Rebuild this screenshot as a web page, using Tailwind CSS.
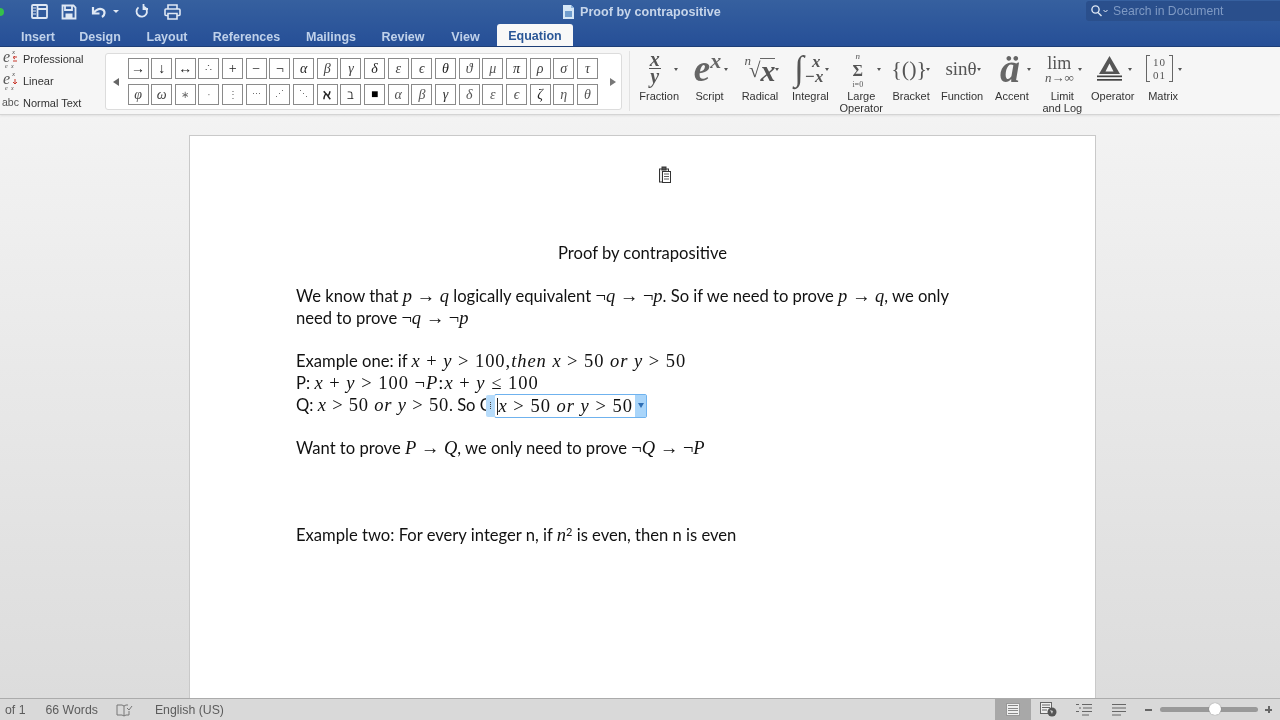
<!DOCTYPE html>
<html>
<head>
<meta charset="utf-8">
<script src="https://cdn.jsdelivr.net/npm/@tailwindcss/browser@4"></script>
</head>
<body class="m-0 overflow-hidden">
<div class="w-[1280px] h-[720px] flex flex-col overflow-hidden font-['Liberation_Sans',sans-serif] bg-[#e4e4e4] blur-[0.3px]">

  <!-- Title bar -->
  <div class="h-[47px] shrink-0 flex flex-col bg-gradient-to-b from-[#36609f] to-[#264f97] border-b border-[#1e3f78]">
    <div class="h-[23px] flex items-center relative">
      <div class="w-[4px] h-[8px] bg-[#35c04a] rounded-r-full"></div>
      <div class="flex items-center text-[#dfe8f4] ml-[27px] gap-[13px]">
        <svg class="w-[17px] h-[15px]" viewBox="0 0 17 15" fill="none" stroke="currentColor" stroke-width="1.800"><rect x="1" y="1" width="15" height="13" rx="1"/><path d="M6.500 1v13M6.500 5h9.500"/><path d="M2 4h3M2 7h3M2 10h3" stroke-width="1"/></svg>
        <svg class="w-[16px] h-[16px]" viewBox="0 0 16 16" fill="none" stroke="currentColor" stroke-width="1.800"><path d="M1.500 1.500h11l2 2v11h-13z"/><path d="M4 1.500v4.500h7V1.500" /><rect x="4.500" y="9.500" width="7" height="5" fill="currentColor" stroke="none"/></svg>
        <div class="flex items-center ml-[1px]">
          <svg class="w-[17px] h-[14px]" viewBox="0 0 17 14" fill="none" stroke="currentColor" stroke-width="2.200"><path d="M2 2v6.500h6.500"/><path d="M2.500 8.500c2-4 6-5.500 9-4 3 1.500 2.500 5.500-.5 7.500"/></svg>
          <div class="ml-[5px] w-0 h-0 border-l-[3px] border-r-[3px] border-t-[3px] border-l-transparent border-r-transparent border-t-[#dfe8f4]"></div>
        </div>
        <svg class="w-[14px] h-[15px] ml-[3px]" viewBox="0 0 14 15" fill="none" stroke="currentColor" stroke-width="1.800"><path d="M9 2.800a5.200 5.200 0 1 1-5.500.6"/><path d="M8.500 0v5h4.500"/></svg>
        <svg class="w-[17px] h-[16px] ml-[2px]" viewBox="0 0 17 16" fill="none" stroke="currentColor" stroke-width="1.600"><path d="M4 5V1h9v4"/><rect x="1" y="5" width="15" height="6.500" rx="1"/><path d="M4 9.500h9V15H4z" fill="#2f5899"/></svg>
      </div>
      <div class="absolute left-[563px] top-[5px] flex items-center">
        <svg class="w-[11px] h-[14px]" viewBox="0 0 11 14"><path d="M0 0h8l3 3v11H0z" fill="#d5e6f6"/><path d="M8 0l3 3H8z" fill="#8fb5dd"/><rect x="2" y="6" width="7" height="6" fill="#6f9ccd"/></svg>
        <span class="ml-[6px] text-[12.600px] font-bold text-[#c6d5ea] leading-[14px]">Proof by contrapositive</span>
      </div>
      <div class="absolute left-[1086px] top-[1px] w-[194px] h-[20px] bg-[#2a4f8c] rounded-l-[3px] flex items-center pl-[5px]">
        <svg class="w-[11px] h-[12px] text-[#dfe8f4]" viewBox="0 0 11 12" fill="none" stroke="currentColor" stroke-width="1.400"><circle cx="4.500" cy="4.500" r="3.600"/><path d="M7 7.500l3.500 3.500"/></svg>
        <svg class="w-[5px] h-[4px] ml-[1px] text-[#dfe8f4]" viewBox="0 0 5 4" fill="none" stroke="currentColor" stroke-width="1"><path d="M.5 1l2 2 2-2"/></svg>
        <span class="ml-[5px] text-[12.200px] text-[#7f9ac4]">Search in Document</span>
      </div>
    </div>
    <div class="h-[23px] flex items-end pl-[7px] text-[12.500px] font-bold text-[#bfd1ea]">
      <div class="w-[62px] h-[23px] pt-[6px] flex items-center justify-center">Insert</div>
      <div class="w-[62px] h-[23px] pt-[6px] flex items-center justify-center">Design</div>
      <div class="w-[72px] h-[23px] pt-[6px] flex items-center justify-center">Layout</div>
      <div class="w-[87px] h-[23px] pt-[6px] flex items-center justify-center">References</div>
      <div class="w-[82px] h-[23px] pt-[6px] flex items-center justify-center">Mailings</div>
      <div class="w-[62px] h-[23px] pt-[6px] flex items-center justify-center">Review</div>
      <div class="w-[63px] h-[23px] pt-[6px] flex items-center justify-center">View</div>
      <div class="w-[76px] h-[22px] pt-[3px] flex items-center justify-center bg-[#f8f8f8] rounded-t-[3px] text-[#2b5797] font-bold text-[12.500px]">Equation</div>
    </div>
  </div>

  <!-- Ribbon -->
  <div class="h-[68px] shrink-0 flex bg-[#f6f6f6] border-b border-[#d4d4d4] shadow-[0_1px_2px_rgba(0,0,0,0.08)] relative z-10">
    <div class="w-[105px] pt-[1px] text-[11px] text-[#333] flex flex-col shrink-0">
      <div class="h-[23px] flex items-center pl-[3px]">
        <span class="relative w-[14px] h-[22px] shrink-0 font-['Liberation_Serif',serif] italic text-[#555]"><span class="absolute left-0 top-[0px] text-[16px] leading-[18px]">e</span><span class="absolute left-[9px] top-[0px] text-[7px] leading-[8px]">x</span><span class="absolute left-[2px] top-[15px] text-[6px] leading-[7px]">e</span><span class="absolute left-[8px] top-[15px] text-[6px] leading-[7px]">x</span><svg class="absolute left-[9px] top-[8px] w-[6px] h-[7px]" viewBox="0 0 6 7" fill="none" stroke="#c8362b" stroke-width="1"><path d="M5 1H1.500M3 0 1 1.500 3 3M1 5h4"/></svg></span>
        <span class="ml-[6px]">Professional</span></div>
      <div class="h-[23px] flex items-center pl-[3px]">
        <span class="relative w-[14px] h-[22px] shrink-0 font-['Liberation_Serif',serif] italic text-[#555]"><span class="absolute left-0 top-[0px] text-[16px] leading-[18px]">e</span><span class="absolute left-[9px] top-[0px] text-[7px] leading-[8px]">x</span><span class="absolute left-[2px] top-[15px] text-[6px] leading-[7px]">e</span><span class="absolute left-[8px] top-[15px] text-[6px] leading-[7px]">x</span><svg class="absolute left-[9px] top-[8px] w-[6px] h-[7px]" viewBox="0 0 6 7" fill="none" stroke="#c8362b" stroke-width="1"><path d="M3 1v5M1 4l2 2 2-2"/></svg></span>
        <span class="ml-[6px]">Linear</span></div>
      <div class="h-[22px] flex items-center pl-[2px]"><span class="text-[10.500px] text-[#555]">abc</span><span class="ml-[4px]">Normal Text</span></div>
    </div>
    <div class="w-[517px] h-[57px] mt-[6px] shrink-0 bg-white border border-[#dcdcdc] rounded-[3px] flex items-center relative pl-[21.500px]">
      <div class="absolute left-[7px] top-[24px] w-0 h-0 border-y-[4px] border-r-[6px] border-y-transparent border-r-[#666]"></div>
      <div class="absolute right-[5px] top-[24px] w-0 h-0 border-y-[4px] border-l-[6px] border-y-transparent border-l-[#777]"></div>
      <div class="grid grid-cols-[repeat(20,21px)] auto-rows-[21px] gap-x-[2.670px] gap-y-[5.500px] font-['Liberation_Serif',serif] text-[14px] text-[#222] text-center leading-[19px]">
        <div class="border border-[#8a8a8a]">→</div><div class="border border-[#8a8a8a]">↓</div><div class="border border-[#8a8a8a]">↔</div><div class="border border-[#8a8a8a] text-[#555] text-[11px]">∴</div><div class="border border-[#8a8a8a]">+</div><div class="border border-[#8a8a8a]">−</div><div class="border border-[#8a8a8a]">¬</div><div class="border border-[#8a8a8a] italic">α</div><div class="border border-[#8a8a8a] italic text-[#444]">β</div><div class="border border-[#8a8a8a] italic text-[#444]">γ</div><div class="border border-[#8a8a8a] italic">δ</div><div class="border border-[#8a8a8a] italic text-[#444]">ε</div><div class="border border-[#8a8a8a] italic text-[#444]">ϵ</div><div class="border border-[#8a8a8a] italic">θ</div><div class="border border-[#8a8a8a] italic text-[#444]">ϑ</div><div class="border border-[#8a8a8a] italic text-[#555]">μ</div><div class="border border-[#8a8a8a] italic">π</div><div class="border border-[#8a8a8a] italic text-[#444]">ρ</div><div class="border border-[#8a8a8a] italic text-[#444]">σ</div><div class="border border-[#8a8a8a] italic text-[#444]">τ</div>
        <div class="border border-[#8a8a8a] italic text-[#444]">φ</div><div class="border border-[#8a8a8a] italic text-[#444]">ω</div><div class="border border-[#8a8a8a] text-[#666] text-[10px]">∗</div><div class="border border-[#8a8a8a] text-[#666] text-[10px]">·</div><div class="border border-[#8a8a8a] text-[#666] text-[10px]">⋮</div><div class="border border-[#8a8a8a] text-[#666] text-[9px]">⋯</div><div class="border border-[#8a8a8a] text-[#666] text-[9px]">⋰</div><div class="border border-[#8a8a8a] text-[#666] text-[9px]">⋱</div><div class="border border-[#8a8a8a] font-bold text-[13px]">ℵ</div><div class="border border-[#8a8a8a] text-[13px]">ℶ</div><div class="border border-[#8a8a8a] text-[12px] text-black">■</div><div class="border border-[#8a8a8a] italic text-[#555]">α</div><div class="border border-[#8a8a8a] italic text-[#555]">β</div><div class="border border-[#8a8a8a] italic text-[#333]">γ</div><div class="border border-[#8a8a8a] italic text-[#555]">δ</div><div class="border border-[#8a8a8a] italic text-[#555]">ε</div><div class="border border-[#8a8a8a] italic text-[#555]">ϵ</div><div class="border border-[#8a8a8a] italic">ζ</div><div class="border border-[#8a8a8a] italic text-[#555]">η</div><div class="border border-[#8a8a8a] italic text-[#555]">θ</div>
      </div>
    </div>
    <div class="w-px h-[60px] mt-[4px] ml-[7px] bg-[#e2e2e2] shrink-0"></div>
    <!-- Equation tools -->
    <div class="flex pl-[4px] text-[11px] text-[#333] text-center leading-[12px]">
      <div class="w-[50.400px] relative">
        <div class="h-[43px] pb-[2px] flex items-center justify-center font-['Liberation_Serif',serif] italic font-bold text-[#555] pr-[9px]"><div class="flex flex-col items-center text-[20px] leading-[15px]"><span class="border-b-[1.500px] border-[#555] px-[1px] pb-[1px]">x</span><span>y</span></div></div>
        <div class="absolute left-[40px] top-[21px] w-0 h-0 border-x-[2.500px] border-t-[3px] border-x-transparent border-t-[#555]"></div>
        <div>Fraction</div>
      </div>
      <div class="w-[50.400px] relative">
        <div class="h-[43px] flex items-center justify-center font-['Liberation_Serif',serif] italic font-bold text-[#666] pr-[4px]"><span class="text-[37px] leading-none">e</span><span class="text-[22px] leading-none -mt-[16px]">x</span></div>
        <div class="absolute left-[40px] top-[21px] w-0 h-0 border-x-[2.500px] border-t-[3px] border-x-transparent border-t-[#555]"></div>
        <div>Script</div>
      </div>
      <div class="w-[50.400px] relative">
        <div class="h-[43px] flex items-center justify-center font-['Liberation_Serif',serif] text-[#555] pr-[0px]"><span class="italic text-[13px] -mt-[16px] -mr-[2px]">n</span><span class="text-[21px] leading-none mt-[4px]">√</span><span class="italic font-bold text-[30px] leading-[24px] border-t border-[#666] mt-[3px]">x</span></div>
        <div class="absolute left-[40px] top-[21px] w-0 h-0 border-x-[2.500px] border-t-[3px] border-x-transparent border-t-[#555]"></div>
        <div>Radical</div>
      </div>
      <div class="w-[50.400px] relative">
        <div class="h-[43px] flex items-center justify-center font-['Liberation_Serif',serif] text-[#555] pr-[3px]"><span class="italic text-[35px] leading-none">∫</span><span class="flex flex-col italic font-bold text-[17px] leading-[15px] pl-[1px]"><span class="pl-[4px]">x</span><span>−x</span></span></div>
        <div class="absolute left-[40px] top-[21px] w-0 h-0 border-x-[2.500px] border-t-[3px] border-x-transparent border-t-[#555]"></div>
        <div>Integral</div>
      </div>
      <div class="w-[50.400px] relative">
        <div class="h-[43px] pt-[4px] flex flex-col items-center justify-center font-['Liberation_Serif',serif] text-[#555] pr-[6px]"><span class="italic text-[9px] leading-[10.400px]">n</span><span class="text-[16px] leading-[18.400px] font-bold">Σ</span><span class="text-[8px] leading-[9.200px]">i=0</span></div>
        <div class="absolute left-[41px] top-[21px] w-0 h-0 border-x-[2.500px] border-t-[3px] border-x-transparent border-t-[#555]"></div>
        <div class="pl-[1px]">Large<br>Operator</div>
      </div>
      <div class="w-[50.400px] relative">
        <div class="h-[43px] flex items-center justify-center font-['Liberation_Serif',serif] text-[#555] text-[22px] pr-[4px]">{()}</div>
        <div class="absolute left-[40px] top-[21px] w-0 h-0 border-x-[2.500px] border-t-[3px] border-x-transparent border-t-[#555]"></div>
        <div>Bracket</div>
      </div>
      <div class="w-[50.400px] relative">
        <div class="h-[43px] flex items-center justify-center font-['Liberation_Serif',serif] text-[#555] text-[19px] pr-[1px]">sinθ</div>
        <div class="absolute left-[41px] top-[21px] w-0 h-0 border-x-[2.500px] border-t-[3px] border-x-transparent border-t-[#555]"></div>
        <div class="pl-[1px]">Function</div>
      </div>
      <div class="w-[50.400px] relative">
        <div class="h-[43px] flex items-center justify-center font-['Liberation_Serif',serif] italic font-bold text-[#666] text-[40px] leading-none pr-[4px]">ä</div>
        <div class="absolute left-[40px] top-[21px] w-0 h-0 border-x-[2.500px] border-t-[3px] border-x-transparent border-t-[#555]"></div>
        <div>Accent</div>
      </div>
      <div class="w-[50.400px] relative">
        <div class="h-[43px] pt-[2px] flex flex-col items-center justify-center font-['Liberation_Serif',serif] text-[#555] pr-[6px]"><span class="text-[18px] leading-[15px]">lim</span><span class="italic text-[13px] leading-[13px]">n→∞</span></div>
        <div class="absolute left-[41px] top-[21px] w-0 h-0 border-x-[2.500px] border-t-[3px] border-x-transparent border-t-[#555]"></div>
        <div>Limit<br>and Log</div>
      </div>
      <div class="w-[50.400px] relative">
        <div class="h-[43px] flex flex-col items-center justify-center text-[#555] pr-[7px]">
          <svg class="w-[27px] h-[26px]" viewBox="0 0 27 26"><path d="M13.500 0L3 18h21zM13.500 7.500L9.500 15.500h8z" fill="#555" fill-rule="evenodd"/><rect x="1" y="19.500" width="25" height="1.700" fill="#444"/><rect x="1" y="23" width="25" height="1.700" fill="#444"/></svg>
        </div>
        <div class="absolute left-[40px] top-[21px] w-0 h-0 border-x-[2.500px] border-t-[3px] border-x-transparent border-t-[#555]"></div>
        <div>Operator</div>
      </div>
      <div class="w-[50.400px] relative">
        <div class="h-[43px] flex items-center justify-center text-[#555] pr-[7px]">
          <div class="w-[27px] h-[27px] border-x border-[#666] flex flex-col items-center justify-center font-['Liberation_Serif',serif] text-[11px] tracking-[1px] leading-[12.700px] relative"><span class="absolute left-0 top-0 w-[3px] h-full border-y border-[#666]"></span><span class="absolute right-0 top-0 w-[3px] h-full border-y border-[#666]"></span><span>10</span><span>01</span></div>
        </div>
        <div class="absolute left-[40px] top-[21px] w-0 h-0 border-x-[2.500px] border-t-[3px] border-x-transparent border-t-[#555]"></div>
        <div>Matrix</div>
      </div>
    </div>
  </div>

  <!-- Document area -->
  <div class="flex-1 min-h-0 bg-gradient-to-b from-[#f3f3f3] to-[#dcdcdc] pl-[189px] pt-[20px] overflow-hidden">
    <div class="w-[907px] h-[620px] bg-white border border-[#c9c9c9] relative pl-[106px] pt-[106.500px] font-['Lato',sans-serif] text-[16.600px] leading-[21.750px] text-[#111]">
      <svg class="absolute left-[468px] top-[30px] w-[14px] h-[18px]" viewBox="0 0 14 18" fill="none" stroke="#333" stroke-width="1"><rect x="1.500" y="3" width="9" height="13" fill="#eee"/><rect x="4.500" y="5.500" width="8" height="11" fill="#fff"/><path d="M6 8h5M6 10.500h5M6 13h5" stroke-width=".8"/><rect x="4" y="1" width="4" height="3" fill="#555"/></svg>
      <div class="h-[21.750px] pl-[262px] whitespace-nowrap">Proof by contrapositive</div>
      <div class="h-[21.750px]"></div>
      <div class="h-[21.750px] whitespace-nowrap">We know that <span class="font-['Liberation_Serif',serif] text-[18.500px]"><i>p</i> → <i>q</i></span> logically equivalent <span class="font-['Liberation_Serif',serif] text-[18.500px]">¬<i>q</i> → ¬<i>p</i></span>. So if we need to prove <span class="font-['Liberation_Serif',serif] text-[18.500px]"><i>p</i> → <i>q</i></span>, we only</div>
      <div class="h-[21.750px] whitespace-nowrap">need to prove <span class="font-['Liberation_Serif',serif] text-[18.500px]">¬<i>q</i> → ¬<i>p</i></span></div>
      <div class="h-[21.750px]"></div>
      <div class="h-[21.750px] whitespace-nowrap">Example one: if <span class="font-['Liberation_Serif',serif] text-[18.500px] tracking-[0.950px]"><i>x</i> + <i>y</i> &gt; 100,<i>then x</i> &gt; 50 <i>or y</i> &gt; 50</span></div>
      <div class="h-[21.750px] whitespace-nowrap">P: <span class="font-['Liberation_Serif',serif] text-[18.500px] tracking-[1px]"><i>x</i> + <i>y</i> &gt; 100 ¬<i>P</i>:<i>x</i> + <i>y</i> ≤ 100</span></div>
      <div class="h-[21.750px] whitespace-nowrap relative">Q: <span class="font-['Liberation_Serif',serif] text-[18.500px] tracking-[0.800px]"><i>x</i> &gt; 50 <i>or y</i> &gt; 50</span>. So Q<span class="inline-block absolute left-[198px] top-[-1px] w-[153px] h-[24px] border border-[#6fb2ee] rounded-[2px] bg-white font-['Liberation_Serif',serif] text-[18.500px] tracking-[1px] leading-[22px] pl-[3.500px]"><span class="absolute left-[-9px] top-[0px] w-[9px] h-[22px] bg-[#b7dcfb] rounded-l-[2px] flex flex-col items-center justify-center gap-[1px]"><span class="w-[1px] h-[1px] bg-[#444]"></span><span class="w-[1px] h-[1px] bg-[#444]"></span><span class="w-[1px] h-[1px] bg-[#444]"></span><span class="w-[1px] h-[1px] bg-[#444]"></span></span><span class="absolute left-[2px] top-[3px] w-px h-[17px] bg-[#222]"></span><i>x</i> &gt; 50 <i>or y</i> &gt; 50<span class="absolute right-0 top-0 w-[11px] h-[22px] bg-[#a9d5fa] flex items-center justify-center"><span class="w-0 h-0 border-x-[3px] border-t-[5px] border-x-transparent border-t-[#2f6fb5]"></span></span></span></div>
      <div class="h-[21.750px]"></div>
      <div class="h-[21.750px] whitespace-nowrap">Want to prove <span class="font-['Liberation_Serif',serif] text-[18.500px]"><i>P</i> → <i>Q</i></span>, we only need to prove <span class="font-['Liberation_Serif',serif] text-[18.500px]">¬<i>Q</i> → ¬<i>P</i></span></div>
      <div class="h-[65.250px]"></div>
      <div class="h-[21.750px] whitespace-nowrap">Example two: For every integer n, if <i class="font-['Liberation_Serif',serif] text-[18.500px]">n</i><sup class="text-[11px]">2</sup> is even, then n is even</div>
    </div>
  </div>

  <!-- Status bar -->
  <div class="h-[22px] shrink-0 bg-[#d9d9d9] border-t border-[#ababab] flex items-center pt-[1px] text-[12.300px] text-[#5c5c5c] relative">
    <span class="ml-[5px]">of 1</span>
    <span class="ml-[20px]">66 Words</span>
    <svg class="ml-[18px] w-[17px] h-[13px]" viewBox="0 0 17 13" fill="none" stroke="#777" stroke-width="1"><path d="M1 1h5l2 1v10l-2-1H1zM8 2l2-1h2M8 12l2-1h3V7"/><path d="M11 4l2 2 3-4"/></svg>
    <span class="ml-[22px]">English (US)</span>
    <div class="absolute left-[995px] top-0 h-[21px] w-[36px] bg-[#a8a8a8] flex items-center justify-center">
      <div class="w-[14px] h-[13px] bg-[#eee] border border-[#999] flex flex-col justify-around px-[1px]"><span class="h-px bg-[#888]"></span><span class="h-px bg-[#888]"></span><span class="h-px bg-[#888]"></span><span class="h-px bg-[#888]"></span></div>
    </div>
    <svg class="absolute left-[1040px] top-[3px] w-[17px] h-[15px]" viewBox="0 0 17 15"><rect x="0.500" y="0.500" width="11" height="11" fill="#eee" stroke="#666"/><path d="M2 3h8M2 5.500h8M2 8h5" stroke="#666"/><circle cx="12" cy="10" r="4.500" fill="#555"/><path d="M10 8l3 1-1 3z" fill="#ccc"/></svg>
    <svg class="absolute left-[1076px] top-[4px] w-[16px] h-[13px]" viewBox="0 0 16 13" stroke="#666" stroke-width="1"><path d="M0 1.500h3M6 1.500h10M3 5h2M7 5h9M0 8.500h3M6 8.500h10M6 12h7"/></svg>
    <svg class="absolute left-[1111px] top-[4px] w-[16px] h-[13px]" viewBox="0 0 16 13" stroke="#666" stroke-width="1"><path d="M1 1.500h14M1 5h14M1 8.500h14M1 12h9"/></svg>
    <div class="absolute left-[1145px] top-[10px] w-[7px] h-[2px] bg-[#666]"></div>
    <div class="absolute left-[1160px] top-[8px] w-[98px] h-[5px] rounded-full bg-[#999]"></div>
    <div class="absolute left-[1209px] top-[4px] w-[12px] h-[12px] rounded-full bg-white shadow-[0_0_1px_#666]"></div>
    <div class="absolute left-[1265px] top-[7px] w-[7px] h-[7px] bg-[linear-gradient(#666,#666),linear-gradient(#666,#666)] bg-[length:100%_2px,2px_100%] bg-center bg-no-repeat"></div>
  </div>
</div>
</body>
</html>
